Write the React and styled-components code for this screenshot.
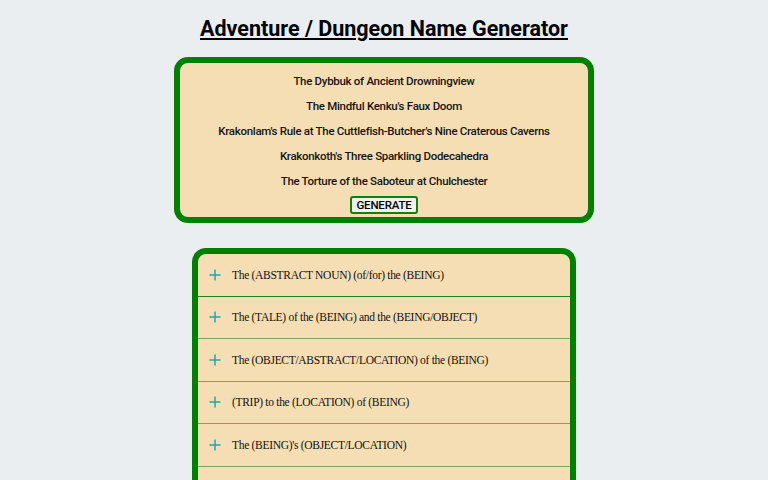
import React from 'react'
import styled, { createGlobalStyle } from 'styled-components'

const GlobalStyle = createGlobalStyle`
    body {
        margin: 0;
        background: #eaeef1;
        font-family: Roboto, "Liberation Sans", sans-serif;
    }
`

const names = [
    'The Dybbuk of Ancient Drowningview',
    "The Mindful Kenku's Faux Doom",
    "Krakonlam's Rule at The Cuttlefish-Butcher's Nine Craterous Caverns",
    "Krakonkoth's Three Sparkling Dodecahedra",
    'The Torture of the Saboteur at Chulchester',
]

const patterns = [
    'The (ABSTRACT NOUN) (of/for) the (BEING)',
    'The (TALE) of the (BEING) and the (BEING/OBJECT)',
    'The (OBJECT/ABSTRACT/LOCATION) of the (BEING)',
    '(TRIP) to the (LOCATION) of (BEING)',
    "The (BEING)'s (OBJECT/LOCATION)",
    'The (ADJECTIVE) (LOCATION) of (BEING)',
]

const PlusIcon = () => (
    <svg width='12' height='12' viewBox='0 0 12 12'>
        <path d='M6 0.5v11M0.5 6h11' stroke='#25a4b4' strokeWidth='1.5' fill='none' />
    </svg>
)

const App = () => {
    return <Wrapper>
        <GlobalStyle />
        <Title>Adventure / Dungeon Name Generator</Title>
        <ResultCard>
            {names.map((name) => <Name key={name}>{name}</Name>)}
            <GenerateButton>GENERATE</GenerateButton>
        </ResultCard>
        <PatternCard>
            {patterns.map((p, i) => (
                <PatternRow key={p} $first={i === 0}>
                    <PlusIcon />
                    <span>{p}</span>
                </PatternRow>
            ))}
        </PatternCard>
    </Wrapper>
}

const Wrapper = styled.main`
    display: flex;
    flex-direction: column;
    align-items: center;
    padding-top: 15px;
`

const Title = styled.h1`
    margin: 0 0 14px;
    font-size: 21.5px;
    line-height: 28px;
    font-weight: 700;
    text-decoration: underline;
    text-underline-offset: 2px;
    color: #000;
`

const ResultCard = styled.section`
    width: 420px;
    box-sizing: border-box;
    border: 6px solid #008000;
    border-radius: 14px;
    background: #f5deb3;
    padding: 6px 0 3px;
    display: flex;
    flex-direction: column;
    align-items: center;
    margin-bottom: 25px;
`

const Name = styled.div`
    font-size: 11.5px;
    font-weight: 500;
    letter-spacing: -0.3px;
    line-height: 25px;
    color: #151515;
    text-align: center;
`

const GenerateButton = styled.button`
    margin-top: 2px;
    height: 18px;
    padding: 0 4px;
    border: 2px solid #108010;
    border-radius: 3px;
    background: #f1f1ee;
    font-family: Roboto, "Liberation Sans", sans-serif;
    font-size: 11.5px;
    font-weight: 500;
    letter-spacing: -0.2px;
    color: #000;
    line-height: 14px;
`

const PatternCard = styled.section`
    width: 384px;
    box-sizing: border-box;
    border: 6px solid #008000;
    border-radius: 14px;
    background: #f5deb3;
    overflow: hidden;
`

const PatternRow = styled.div`
    display: flex;
    align-items: center;
    gap: 11px;
    height: 41.5px;
    padding-left: 11px;
    border-bottom: 1px solid ${(p) => (p.$first ? '#1f7f1f' : '#7ea35a')};
    font-family: "Liberation Serif", "Times New Roman", serif;
    font-size: 11.5px;
    letter-spacing: -0.3px;
    color: #111;
`

export default App
